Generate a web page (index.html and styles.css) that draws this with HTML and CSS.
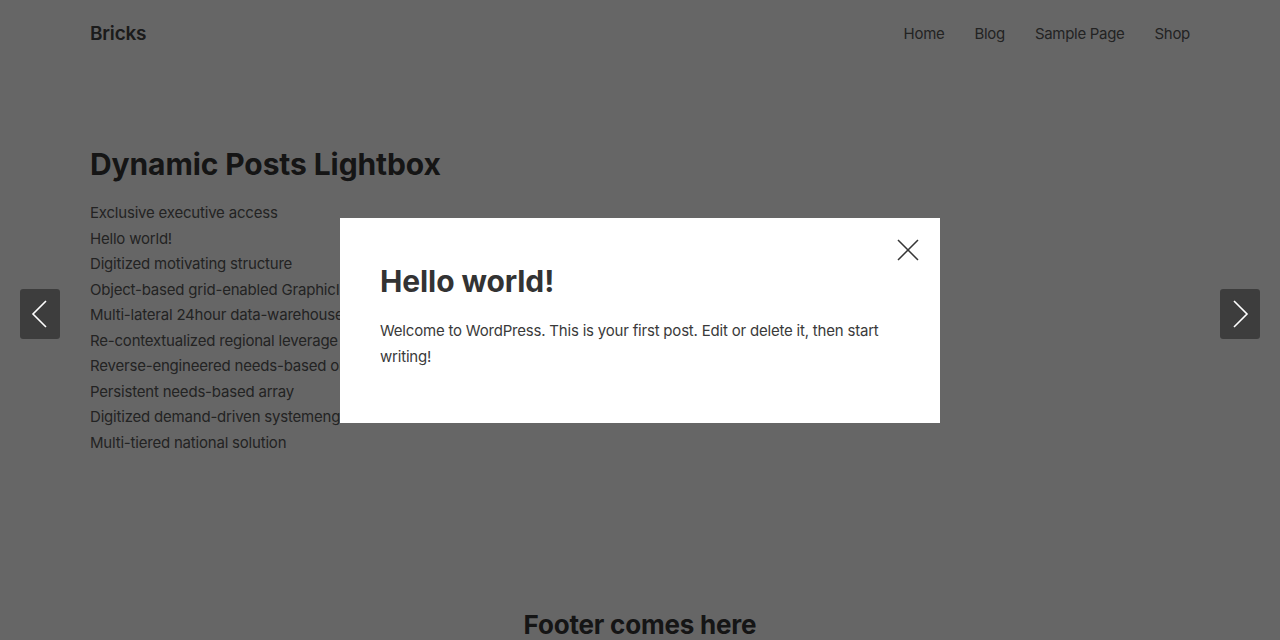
FILE: index.html
```html
<!DOCTYPE html>
<html lang="en">
<head>
  <meta charset="UTF-8">
  <title>Dynamic Posts Lightbox</title>
  <link rel="stylesheet" href="styles.css">
</head>
<body>

  <header class="site-header">
    <div class="container header-inner">
      <a class="logo" href="#">Bricks</a>
      <nav class="main-nav">
        <a href="#">Home</a>
        <a href="#">Blog</a>
        <a href="#">Sample Page</a>
        <a href="#">Shop</a>
      </nav>
    </div>
  </header>

  <main class="container content">
    <h1 class="page-title">Dynamic Posts Lightbox</h1>
    <ul class="post-list">
      <li><a href="#">Exclusive executive access</a></li>
      <li><a href="#">Hello world!</a></li>
      <li><a href="#">Digitized motivating structure</a></li>
      <li><a href="#">Object-based grid-enabled GraphicInterface</a></li>
      <li><a href="#">Multi-lateral 24hour data-warehouse</a></li>
      <li><a href="#">Re-contextualized regional leverage</a></li>
      <li><a href="#">Reverse-engineered needs-based orchestration</a></li>
      <li><a href="#">Persistent needs-based array</a></li>
      <li><a href="#">Digitized demand-driven systemengine</a></li>
      <li><a href="#">Multi-tiered national solution</a></li>
    </ul>
  </main>

  <footer class="site-footer">
    <h2>Footer comes here</h2>
  </footer>

  <!-- lightbox -->
  <div class="lightbox">
    <button class="lb-arrow lb-prev" aria-label="Previous">
      <svg width="18" height="28" viewBox="0 0 18 28"><polyline points="15,1 2,14 15,27" fill="none" stroke="#fff" stroke-width="1.6"/></svg>
    </button>

    <div class="lb-box">
      <button class="lb-close" aria-label="Close">
        <svg width="22" height="22" viewBox="0 0 22 22"><path d="M1 1 L21 21 M21 1 L1 21" stroke="#363636" stroke-width="1.5" fill="none"/></svg>
      </button>
      <h2 class="lb-title">Hello world!</h2>
      <p class="lb-text">Welcome to WordPress. This is your first post. Edit or delete it, then start writing!</p>
    </div>

    <button class="lb-arrow lb-next" aria-label="Next">
      <svg width="18" height="28" viewBox="0 0 18 28"><polyline points="3,1 16,14 3,27" fill="none" stroke="#fff" stroke-width="1.6"/></svg>
    </button>
  </div>

</body>
</html>
```

FILE: styles.css
```css
* {
	margin: 0;
	padding: 0;
	box-sizing: border-box;
}

body {
	font-family: Inter, "Noto Sans", sans-serif;
	font-size: 15px;
	letter-spacing: -0.2px;
	color: #585858;
	background: #fff;
	overflow: hidden;
	height: 640px;
}

a {
	color: inherit;
	text-decoration: none;
}

.container {
	width: 1100px;
	margin: 0 auto;
}

.header-inner {
	display: flex;
	justify-content: space-between;
	align-items: center;
	height: 66px;
}

.logo {
	font-size: 19px;
	font-weight: 600;
	color: #444;
}

.main-nav {
	display: flex;
	gap: 30px;
	letter-spacing: -0.3px;
}

.main-nav a {
	font-size: 15px;
}

.content {
	padding-top: 79px;
	height: 480px;
}

.page-title {
	font-size: 30px;
	font-weight: 700;
	line-height: 38px;
	letter-spacing: -0.1px;
	color: #363636;
	margin-bottom: 17px;
}

.post-list {
	list-style: none;
}

.post-list li {
	line-height: 25.5px;
}

.site-footer {
	text-align: center;
	padding-top: 63px;
}

.site-footer h2 {
	font-size: 26px;
	font-weight: 700;
	line-height: 32px;
	letter-spacing: -0.2px;
	color: #363636;
}

/* lightbox */
.lightbox {
	position: fixed;
	inset: 0;
	background: rgba(0, 0, 0, 0.6);
	display: flex;
	align-items: center;
	justify-content: center;
}

.lb-box {
	position: relative;
	width: 600px;
	height: 205px;
	background: #fff;
	padding: 40px;
	color: #3a3a3a;
}

.lb-title {
	font-size: 30px;
	font-weight: 700;
	line-height: 46px;
	letter-spacing: -0.1px;
	color: #333;
	margin-bottom: 14px;
}

.lb-text {
	line-height: 26px;
}

.lb-close {
	position: absolute;
	top: 21px;
	right: 21px;
	border: 0;
	background: none;
	width: 22px;
	height: 22px;
	display: flex;
	cursor: pointer;
}

.lb-arrow {
	position: absolute;
	top: 289px;
	width: 40px;
	height: 50px;
	border: 0;
	border-radius: 3px;
	background: rgba(0, 0, 0, 0.4);
	display: flex;
	align-items: center;
	justify-content: center;
	cursor: pointer;
}

.lb-prev {
	left: 20px;
}

.lb-next {
	right: 20px;
}
```
